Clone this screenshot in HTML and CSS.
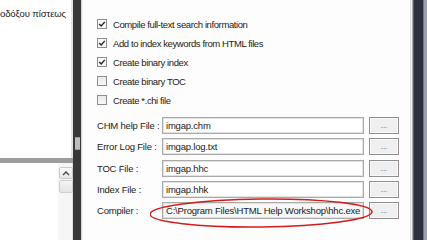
FILE: index.html
```html
<!DOCTYPE html>
<html>
<head>
<meta charset="utf-8">
<link rel="stylesheet" href="styles.css">
</head>
<body>
<div class="screen">
  <div class="left">
    <div class="left-top">
      <div class="greek">οδόξου πίστεως</div>
    </div>
    <div class="left-bar"></div>
    <div class="left-bottom">
      <div class="list"></div>
      <div class="vscroll">
        <div class="sb-up"><svg width="8" height="6" viewBox="0 0 8 6"><path d="M1 5 L4 2 L7 5" fill="none" stroke="#4a4a4a" stroke-width="1.4"/></svg></div>
        <div class="sb-thumb"></div>
      </div>
    </div>
  </div>
  <div class="splitter"><div class="split-thumb"></div></div>
  <div class="dialog">
    <div class="checks">
      <div class="chk-row"><span class="cb on"><svg width="8" height="8" viewBox="0 0 8 8"><path d="M1.2 4 L3.2 6 L6.8 1.8" fill="none" stroke="#222" stroke-width="1.3"/></svg></span><span class="lbl">Compile full-text search information</span></div>
      <div class="chk-row"><span class="cb on"><svg width="8" height="8" viewBox="0 0 8 8"><path d="M1.2 4 L3.2 6 L6.8 1.8" fill="none" stroke="#222" stroke-width="1.3"/></svg></span><span class="lbl">Add to index keywords from HTML files</span></div>
      <div class="chk-row"><span class="cb on"><svg width="8" height="8" viewBox="0 0 8 8"><path d="M1.2 4 L3.2 6 L6.8 1.8" fill="none" stroke="#222" stroke-width="1.3"/></svg></span><span class="lbl">Create binary index</span></div>
      <div class="chk-row"><span class="cb"></span><span class="lbl">Create binary TOC</span></div>
      <div class="chk-row"><span class="cb"></span><span class="lbl">Create *.chi file</span></div>
    </div>
    <div class="fields">
      <div class="f-row"><span class="f-lbl">CHM help File :</span><span class="f-box">imgap.chm</span><span class="f-btn">...</span></div>
      <div class="f-row"><span class="f-lbl">Error Log File :</span><span class="f-box">imgap.log.txt</span><span class="f-btn">...</span></div>
      <div class="f-row"><span class="f-lbl">TOC File :</span><span class="f-box">imgap.hhc</span><span class="f-btn">...</span></div>
      <div class="f-row"><span class="f-lbl">Index File :</span><span class="f-box">imgap.hhk</span><span class="f-btn">...</span></div>
      <div class="f-row"><span class="f-lbl">Compiler :</span><span class="f-box ro">C:\Program Files\HTML Help Workshop\hhc.exe</span><span class="f-btn">...</span></div>
    </div>
    <svg class="mark" width="240" height="40" viewBox="0 0 240 40"><ellipse cx="111" cy="19" rx="111" ry="14" fill="none" stroke="#d41a1a" stroke-width="1.6" transform="rotate(-0.6 111 19)"/></svg>
  </div>
  <div class="frame"></div>
</div>
</body>
</html>
```
FILE: styles.css
```css
html, body {
  margin: 0;
  padding: 0;
  background: #fdfdfd;
}
.screen {
  width: 427px;
  height: 240px;
  overflow: hidden;
  display: flex;
  font-family: "Liberation Sans", Arial, sans-serif;
  font-size: 9.5px;
  color: #222;
}
.left {
  width: 73px;
  display: flex;
  flex-direction: column;
  background: #ffffff;
}
.left-top {
  height: 158px;
  overflow: hidden;
  box-shadow: inset -2px 0 0 #e4e4e4;
}
.greek {
  white-space: nowrap;
  margin-left: 0;
  margin-top: 8px;
  font-size: 9.5px;
  letter-spacing: -0.1px;
  color: #1a1a1a;
}
.left-bar {
  height: 5px;
  background: #9c9c9c;
}
.left-bottom {
  flex: 1;
  display: flex;
}
.list {
  flex: 1;
  background: #ffffff;
}
.vscroll {
  width: 15px;
  background: #f6f6f6;
  padding-top: 4px;
  display: flex;
  flex-direction: column;
  align-items: center;
  box-shadow: inset -1px 0 0 #e0e0e0;
}
.sb-up {
  width: 12px;
  height: 10px;
  border: 1px solid #c9c9c9;
  border-radius: 2px;
  background: linear-gradient(#fafafa, #e6e6e6);
  display: flex;
  align-items: center;
  justify-content: center;
}
.sb-thumb {
  width: 12px;
  height: 11px;
  margin-top: 1px;
  border: 1px solid #cfcfcf;
  border-radius: 2px;
  background: linear-gradient(#f4f4f4, #e4e4e4);
}
.splitter {
  width: 8px;
  background: #383838;
  display: flex;
  justify-content: center;
}
.split-thumb {
  width: 5px;
  height: 13px;
  margin-top: 137px;
  background: #bdbdbd;
  box-shadow: inset 0 1px 0 #9a9a9a, inset 0 -1px 0 #9a9a9a;
}
.dialog {
  width: 329px;
  background: #fdfdfd;
  box-shadow: inset 1px 0 0 #d8d8d8, inset 2px 0 0 #f2f2f2;
  position: relative;
  padding-left: 16px;
  box-sizing: border-box;
}
.checks {
  padding-top: 19px;
  display: flex;
  flex-direction: column;
  gap: 9px;
}
.chk-row {
  height: 10px;
  display: flex;
  align-items: center;
  gap: 6px;
}
.cb {
  width: 8px;
  height: 8px;
  border: 1px solid #8d8d8d;
  background: linear-gradient(#e9e9e9, #f8f8f8);
  display: flex;
  align-items: center;
  justify-content: center;
}
.cb.on {
  background: #f7f7f7;
}
.cb svg {
  display: block;
}
.lbl {
  white-space: nowrap;
  letter-spacing: -0.4px;
}
.fields {
  margin-top: 12px;
  display: flex;
  flex-direction: column;
  gap: 4.3px;
}
.f-row {
  height: 17px;
  display: flex;
  align-items: center;
}
.f-lbl {
  width: 65px;
  white-space: nowrap;
  letter-spacing: -0.2px;
}
.f-box {
  width: 202px;
  height: 17px;
  box-sizing: border-box;
  border: 1px solid #a9a9a9;
  box-shadow: inset 0 0 0 1px #e2e2e2;
  background: #ffffff;
  padding-left: 3px;
  display: flex;
  align-items: center;
  white-space: nowrap;
  letter-spacing: -0.2px;
  color: #1a1a1a;
}
.f-box.ro {
  background: #f7f7f7;
}
.f-btn {
  width: 30px;
  height: 17px;
  margin-left: 5px;
  box-sizing: border-box;
  border: 1px solid #8f8f8f;
  box-shadow: inset 0 0 0 1px #f8f8f8;
  background: #efefef;
  display: flex;
  align-items: flex-end;
  justify-content: center;
  padding-bottom: 3px;
  font-size: 8px;
  line-height: 8px;
  color: #555;
}
.mark {
  position: absolute;
  left: 69px;
  top: 194px;
}
.frame {
  flex: 1;
  background: linear-gradient(90deg, #dedede 0, #dedede 1px, #f6f6f6 1px, #f6f6f6 2px, #a8a8a8 2px, #a8a8a8 3px, #5a5e66 3px, #5a5e66 4px, #2c3240 4px, #2c3240 13px, #6d7686 13px, #6d7686 14px, #9aa2b0 14px);
}
```
